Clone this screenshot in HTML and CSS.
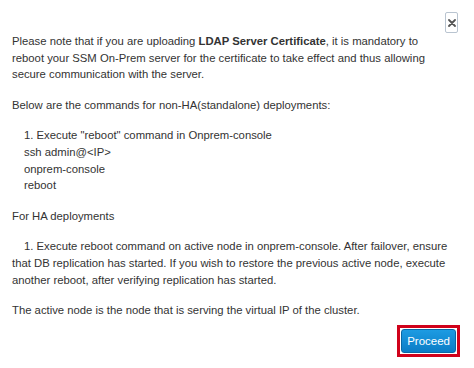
FILE: index.html
```html
<!DOCTYPE html>
<html>
<head>
<meta charset="utf-8">
<link rel="stylesheet" href="styles.css">
</head>
<body>
<div class="modal">
  <div class="modal-header">
    <button class="close" type="button" aria-label="Close">
      <svg width="8" height="8" viewBox="0 0 8 8"><path d="M1 1L7 7M7 1L1 7" stroke="#555" stroke-width="1.8" stroke-linecap="round"/></svg>
    </button>
  </div>
  <div class="modal-body">
    <p>Please note that if you are uploading <b>LDAP Server Certificate</b>, it is mandatory to<br>reboot your SSM On-Prem server for the certificate to take effect and thus allowing secure communication with the server.</p>
    <p>Below are the commands for non-HA(standalone) deployments:</p>
    <div class="cmds">
      <div>1. Execute "reboot" command in Onprem-console</div>
      <div>ssh admin@&lt;IP&gt;</div>
      <div>onprem-console</div>
      <div>reboot</div>
    </div>
    <p>For HA deployments</p>
    <p class="indent">1. Execute reboot command on active node in onprem-console. After failover, ensure that DB replication has started. If you wish to restore the previous active node, execute another reboot, after verifying replication has started.</p>
    <p class="last">The active node is the node that is serving the virtual IP of the cluster.</p>
  </div>
  <div class="modal-footer">
    <div class="highlight">
      <button class="btn-primary" type="button">Proceed</button>
    </div>
  </div>
</div>
</body>
</html>
```
FILE: styles.css
```css
html, body {
  margin: 0;
  padding: 0;
  background: #fff;
}
body {
  font-family: "Liberation Sans", Arial, sans-serif;
  font-size: 11.3px;
  line-height: 16.6px;
  color: #333;
}
.modal {
  padding: 0 12px;
}
.modal-header {
  display: flex;
  justify-content: flex-end;
  padding-top: 12px;
  padding-right: 4px;
}
.close {
  width: 13px;
  height: 21px;
  padding: 0;
  margin: 0;
  border: 1px solid #b9c4d0;
  border-radius: 2px;
  background: #fff;
  display: flex;
  align-items: center;
  justify-content: center;
}
.close svg { display: block; }
.modal-body {
  width: 442px;
}
.modal-body p {
  margin: 0 0 14px;
}
.modal-body p.last {
  margin-bottom: 6px;
}
.cmds {
  padding-left: 12px;
  margin: 14px 0 14px;
}
.indent {
  text-indent: 12px;
}
.modal-footer {
  display: flex;
  justify-content: flex-end;
  padding-right: 2px;
}
.highlight {
  border: 3px solid #d0021b;
  padding: 1px;
}
.btn-primary {
  display: block;
  font-family: "Liberation Sans", Arial, sans-serif;
  font-size: 11.5px;
  color: #fff;
  background: linear-gradient(#1d9be2, #0b7dc6);
  border: 1px solid #0868a6;
  border-radius: 3px;
  padding: 0 5px;
  height: 24px;
  line-height: 22px;
}
```
